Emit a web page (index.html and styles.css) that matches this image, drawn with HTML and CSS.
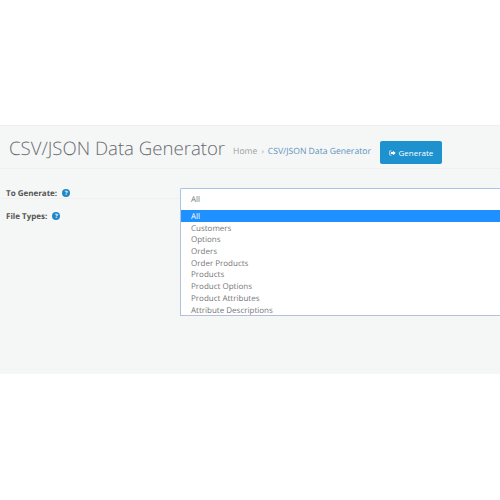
FILE: index.html
```html
<!DOCTYPE html>
<html lang="en">
<head>
<meta charset="utf-8">
<title>CSV/JSON Data Generator</title>
<link rel="stylesheet" href="styles.css">
</head>
<body>
<main class="panel">
  <header class="head">
    <h1 class="title">CSV/JSON Data Generator</h1>
    <nav class="crumbs"><span class="crumb">Home</span><span class="sep">›</span><a class="link">CSV/JSON Data Generator</a></nav>
    <button class="btn"><svg class="btn-icon" viewBox="0 0 10 8"><path d="M3.5 1H1.3Q.5 1 .5 1.8v4.4Q.5 7 1.3 7h2.2" fill="none" stroke="#fff" stroke-width="1"/><path d="M2.6 2.7h3V.8L9.6 4 5.6 7.2V5.3h-3z" fill="#fff"/></svg>Generate</button>
  </header>
  <div class="form">
    <div class="labels">
      <div class="label label-first">To Generate:<span class="help">?</span></div>
      <div class="label">File Types:<span class="help">?</span></div>
    </div>
    <div class="field">
      <div class="select">All</div>
      <ul class="options">
        <li class="option active">All</li>
        <li class="option">Customers</li>
        <li class="option">Options</li>
        <li class="option">Orders</li>
        <li class="option">Order Products</li>
        <li class="option">Products</li>
        <li class="option">Product Options</li>
        <li class="option">Product Attributes</li>
        <li class="option">Attribute Descriptions</li>
      </ul>
    </div>
  </div>
</main>
</body>
</html>
```
FILE: styles.css
```css
* { box-sizing: border-box; }
html, body { margin: 0; padding: 0; background: #fff; }
body { width: 500px; height: 500px; overflow: hidden; padding-top: 125px; font-family: "Open Sans", sans-serif; text-rendering: geometricPrecision; }
.panel { height: 249px; background: #f5f6f6; border-top: 1px solid #efefef; }
.head { height: 43px; display: flex; align-items: flex-start; padding-left: 9px; border-bottom: 1px solid #f0f0f0; }
.title { margin: 9px 0 0; font-size: 18.6px; font-weight: 300; color: #666b70; white-space: nowrap; line-height: 28px; }
.crumbs { margin: 18px 0 0 8px; font-size: 8.6px; line-height: 14px; white-space: nowrap; }
.crumb { color: #a0a0a0; }
.sep { margin: 0 4px; color: #aaa; font-size: 8px; }
.link { color: #5c93bd; }
.btn { margin: 15px 0 0 9px; width: 62px; height: 23px; padding: 0; border: 0; border-radius: 2px; background: #1e91cf; color: #fff; font: 8px "Open Sans", sans-serif; display: flex; align-items: center; justify-content: center; gap: 3px; flex: none; position: relative; z-index: 1; }
.btn-icon { width: 7px; height: 6px; }
.form { display: flex; padding-top: 19px; }
.labels { width: 180px; padding-left: 6px; }
.label { font-size: 8px; font-weight: 700; color: #555; display: flex; align-items: center; white-space: nowrap; height: 10px; }
.label-first { margin: 0 0 12px -6px; padding-left: 6px; height: 11px; border-bottom: 1px solid #f0f0f0; }
.help { width: 8px; height: 8px; margin-left: 5px; border-radius: 50%; background: #1e88c7; color: #fff; font-size: 6px; line-height: 8px; text-align: center; }
.field { flex: 1; min-width: 0; }
.select { height: 22px; background: #fff; border: 1px solid #a5c6e8; border-right: 0; border-bottom: 0; border-radius: 2px 0 0 0; padding: 3px 0 0 10px; font-size: 8px; line-height: 15px; color: #777; }
.options { list-style: none; margin: 0; padding: 0; background: #fff; border-left: 1px solid #b4bedd; border-bottom: 1px solid #b4bedd; }
.option { height: 11.7px; padding-left: 10px; font-size: 8px; line-height: 13px; color: #777; white-space: nowrap; }
.active { background: #1e90ff; color: #fff; }
```
